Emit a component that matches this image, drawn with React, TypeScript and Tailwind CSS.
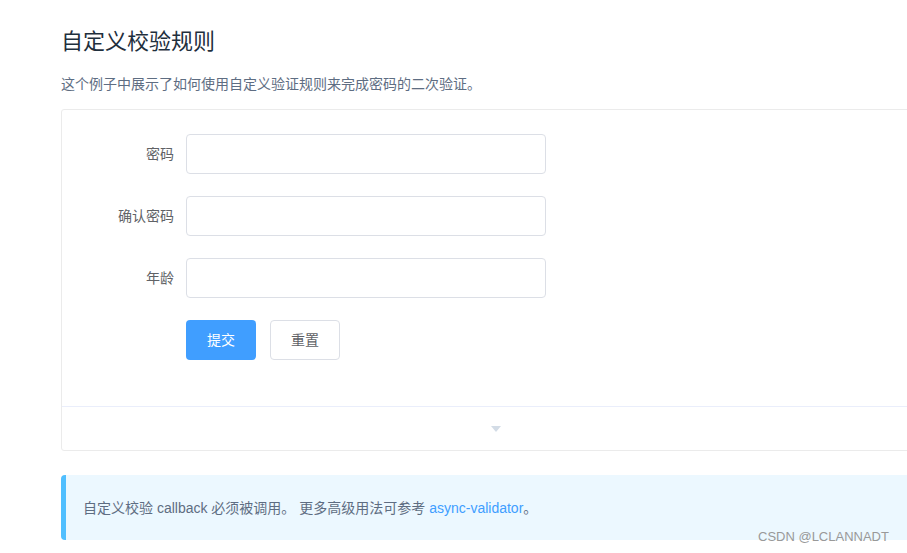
import React from "react";

const font = { fontFamily: '"Liberation Sans", "Noto Sans CJK SC", sans-serif' };

function Row({ label }: { label: string }) {
  return (
    <div className="flex items-center mb-[22px] h-10">
      <label className="w-[100px] pr-3 text-right text-sm text-[#606266] leading-10">{label}</label>
      <input className="w-[360px] h-10 border border-[#dcdfe6] rounded-[4px] px-[15px] outline-none bg-white" />
    </div>
  );
}

export default function App() {
  return (
    <div className="relative w-full h-[553px] overflow-hidden bg-white" style={font}>
      <div className="pl-[61px] pt-[25px] w-[1000px]">
        <h3 className="text-[22px] leading-[33px] text-[#1f2f3d] font-normal">自定义校验规则</h3>
        <p className="mt-4 text-sm leading-[21px] text-[#5e6d82]">这个例子中展示了如何使用自定义验证规则来完成密码的二次验证。</p>
        <div className="mt-[14px] w-[870px] border border-[#ebebeb] rounded-[3px]">
          <div className="pt-6 px-6 pb-6">
            <Row label="密码" />
            <Row label="确认密码" />
            <Row label="年龄" />
            <div className="flex items-center mb-[22px] pl-[100px]">
              <button className="w-[70px] h-10 rounded-[4px] bg-[#409eff] text-white text-sm">提交</button>
              <button className="ml-[14px] w-[70px] h-10 rounded-[4px] border border-[#dcdfe6] bg-white text-[#606266] text-sm">重置</button>
            </div>
          </div>
          <div className="h-11 border-t border-[#eaeefb] flex items-center justify-center">
            <svg width="10" height="6" viewBox="0 0 10 6">
              <path d="M0 0 L10 0 L5 6 Z" fill="#d3dce6" />
            </svg>
          </div>
        </div>
        <div className="mt-6 w-[870px] h-[65px] bg-[#ecf8ff] border-l-[5px] border-[#50bfff] rounded-[4px] flex items-center pl-[17px] text-sm text-[#5e6d82]">
          <span>
            自定义校验 callback 必须被调用。 更多高级用法可参考 <span className="text-[#409eff]">async-validator</span>。
          </span>
        </div>
      </div>
      <div className="absolute left-[758px] top-[529px] text-[13px] leading-4 text-[#999999]" style={{ fontFamily: '"Liberation Sans", sans-serif' }}>
        CSDN @LCLANNADT
      </div>
    </div>
  );
}
